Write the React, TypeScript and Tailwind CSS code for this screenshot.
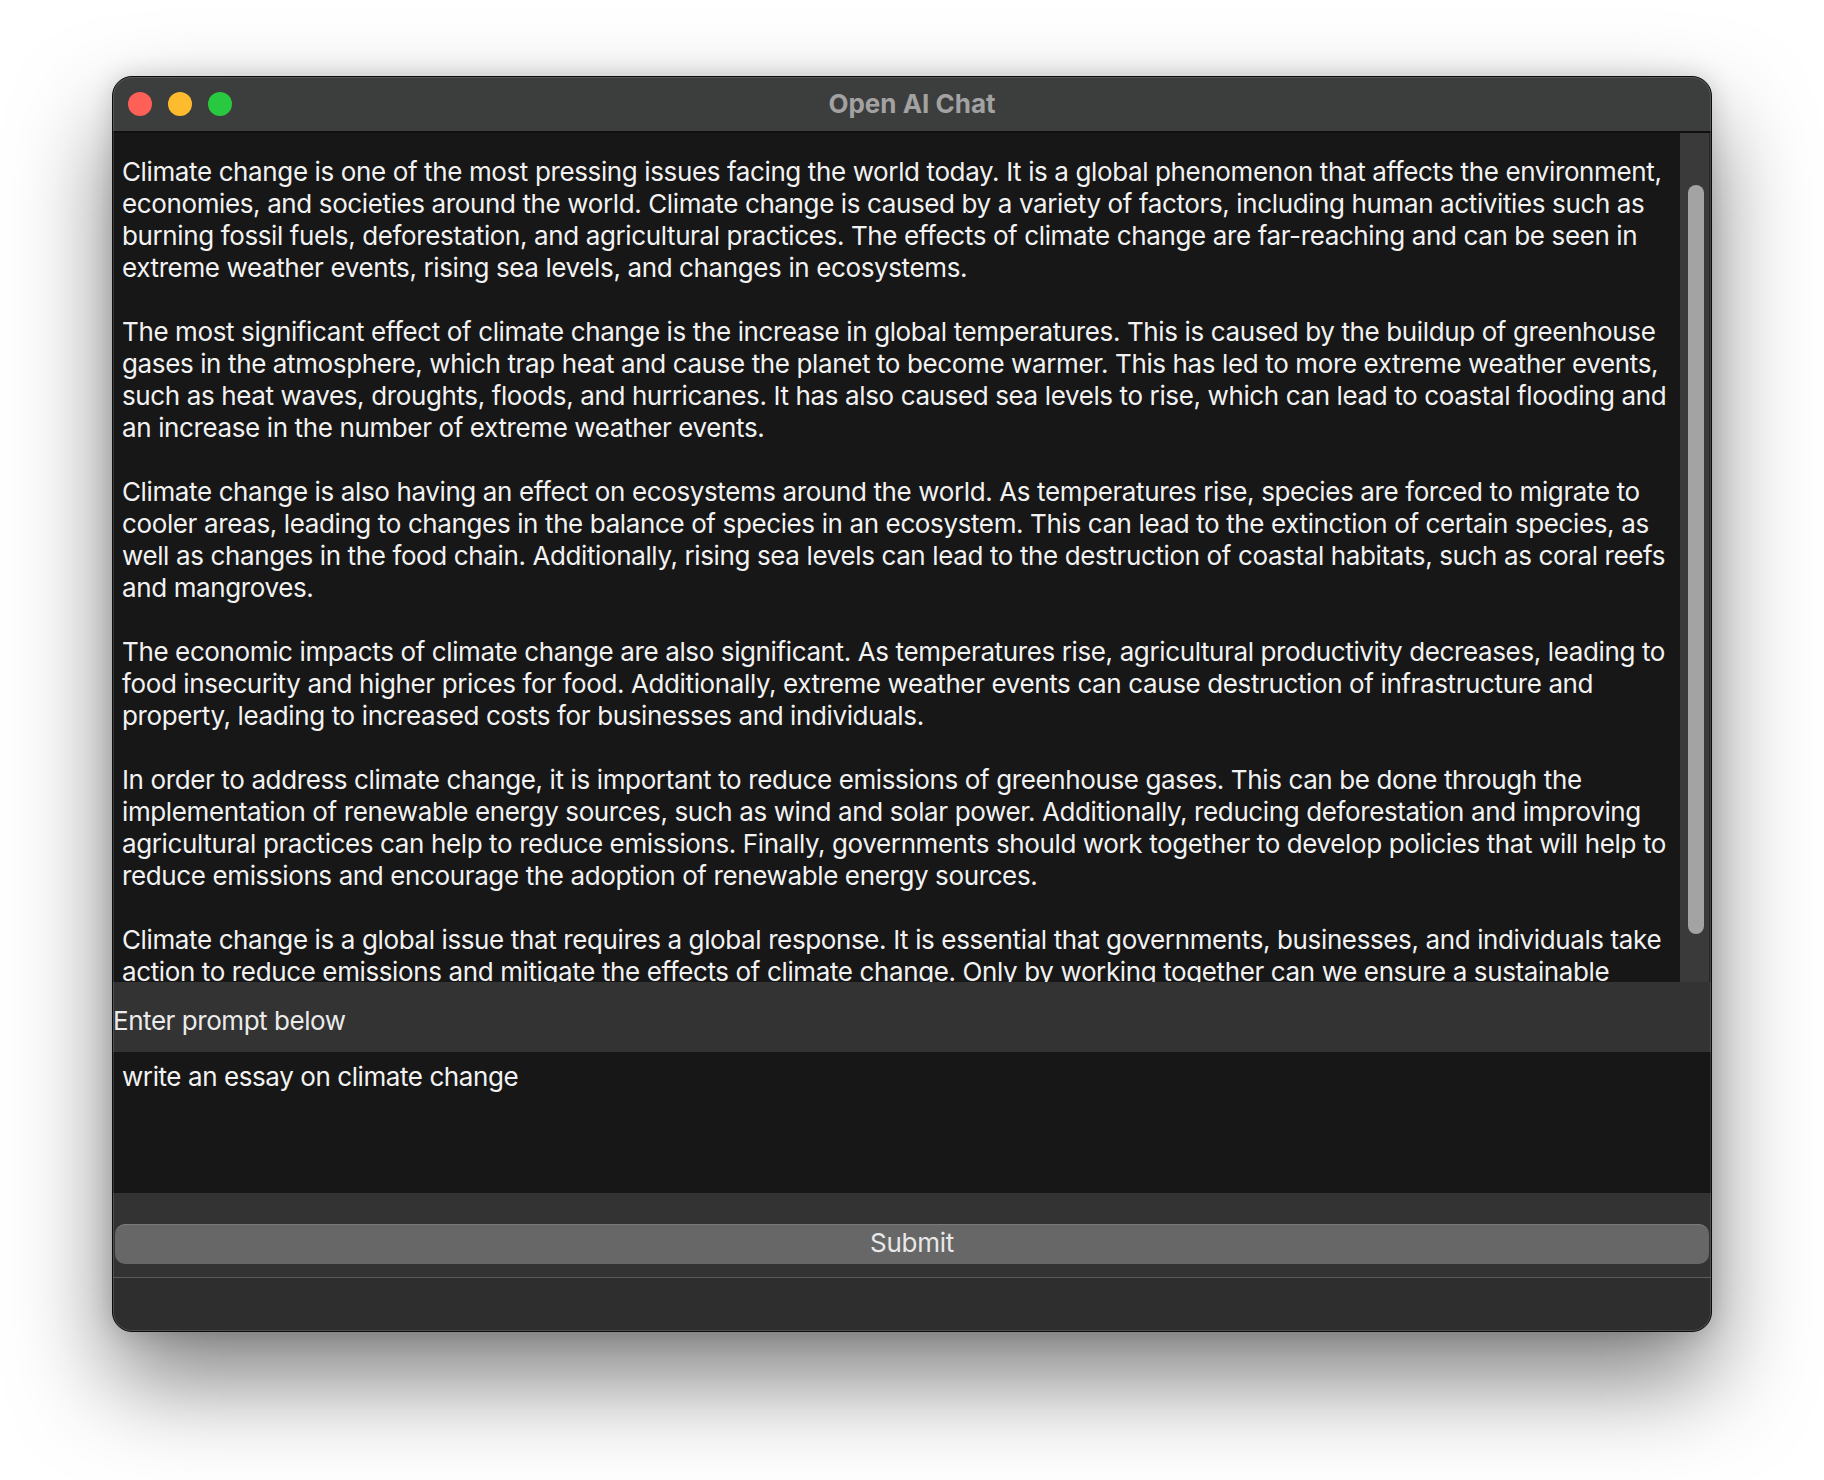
import React from "react";

const paragraphs: string[][] = [
  [
    "Climate change is one of the most pressing issues facing the world today. It is a global phenomenon that affects the environment,",
    "economies, and societies around the world. Climate change is caused by a variety of factors, including human activities such as",
    "burning fossil fuels, deforestation, and agricultural practices. The effects of climate change are far-reaching and can be seen in",
    "extreme weather events, rising sea levels, and changes in ecosystems.",
  ],
  [
    "The most significant effect of climate change is the increase in global temperatures. This is caused by the buildup of greenhouse",
    "gases in the atmosphere, which trap heat and cause the planet to become warmer. This has led to more extreme weather events,",
    "such as heat waves, droughts, floods, and hurricanes. It has also caused sea levels to rise, which can lead to coastal flooding and",
    "an increase in the number of extreme weather events.",
  ],
  [
    "Climate change is also having an effect on ecosystems around the world. As temperatures rise, species are forced to migrate to",
    "cooler areas, leading to changes in the balance of species in an ecosystem. This can lead to the extinction of certain species, as",
    "well as changes in the food chain. Additionally, rising sea levels can lead to the destruction of coastal habitats, such as coral reefs",
    "and mangroves.",
  ],
  [
    "The economic impacts of climate change are also significant. As temperatures rise, agricultural productivity decreases, leading to",
    "food insecurity and higher prices for food. Additionally, extreme weather events can cause destruction of infrastructure and",
    "property, leading to increased costs for businesses and individuals.",
  ],
  [
    "In order to address climate change, it is important to reduce emissions of greenhouse gases. This can be done through the",
    "implementation of renewable energy sources, such as wind and solar power. Additionally, reducing deforestation and improving",
    "agricultural practices can help to reduce emissions. Finally, governments should work together to develop policies that will help to",
    "reduce emissions and encourage the adoption of renewable energy sources.",
  ],
  [
    "Climate change is a global issue that requires a global response. It is essential that governments, businesses, and individuals take",
    "action to reduce emissions and mitigate the effects of climate change. Only by working together can we ensure a sustainable",
  ],
];

export default function App() {
  return (
    <div className="min-h-screen w-full bg-white pl-[112px] pt-[76px] pb-[148px] font-['Inter','Noto_Sans',sans-serif]">
      <div className="relative flex h-[1256px] w-[1600px] flex-col overflow-hidden rounded-[20px] border border-[#0c0c0c] bg-[#2e2e2e] shadow-[0_0_24px_rgba(0,0,0,0.16),0_48px_96px_rgba(0,0,0,0.5)]">
        {/* Title bar */}
        <div className="relative flex h-[56px] shrink-0 items-center border-b-2 border-[#101010] bg-[#3c3d3d] pl-[15px]">
          <div className="flex gap-[16px]">
            <span className="h-[24px] w-[24px] rounded-full bg-[#fe5f57]" />
            <span className="h-[24px] w-[24px] rounded-full bg-[#febb2e]" />
            <span className="h-[24px] w-[24px] rounded-full bg-[#28c840]" />
          </div>
          <div className="absolute inset-0 flex items-center justify-center text-[26px] font-bold leading-[56px] text-[#a2a2a2]">
            Open AI Chat
          </div>
        </div>

        {/* Output area */}
        <div className="flex h-[849px] shrink-0">
          <div className="flex-1 overflow-hidden bg-[#171717] pl-[9px] pt-[23px] text-[26px] leading-[32px] tracking-[-0.38px] text-[#f2f2f2]">
            {paragraphs.map((p, i) => (
              <div key={i} className="mb-[32px]">
                {p.map((line, j) => (
                  <div key={j} className="h-[32px] whitespace-nowrap">
                    {line}
                  </div>
                ))}
              </div>
            ))}
          </div>
          <div className="relative w-[31px] shrink-0 border-r-2 border-[#262626] bg-[#3a3a3a]">
            <div className="ml-[8px] mt-[52px] h-[749px] w-[16px] rounded-full bg-[#a3a3a3]" />
          </div>
        </div>

        {/* Label panel */}
        <div className="h-[71px] shrink-0 border-b border-[#161616] bg-[#333333] pt-[23px] text-[26px] leading-[32px] tracking-[-0.45px] text-[#ebebeb]">
          Enter prompt below
        </div>

        {/* Input */}
        <div className="h-[140px] shrink-0 bg-[#171717] pl-[9px] pt-[8px] text-[26px] leading-[32px] tracking-[-0.42px] text-[#f2f2f2]">
          write an essay on climate change
        </div>

        {/* Button area */}
        <div className="h-[85px] shrink-0 border-b border-[#5c5c5c] bg-[#333333] px-[2px] pt-[31px]">
          <button className="flex h-[40px] w-full items-center justify-center rounded-[10px] border-t border-[#7a7a7a] bg-[#676767] pb-[4px] text-[26px] leading-[34px] tracking-[-0.3px] text-[#e8e8e8]">
            Submit
          </button>
        </div>

        <div className="flex-1 bg-[#2e2e2e]" />

        <div className="pointer-events-none absolute inset-0 rounded-[19px] border border-white/15" />
      </div>
    </div>
  );
}
